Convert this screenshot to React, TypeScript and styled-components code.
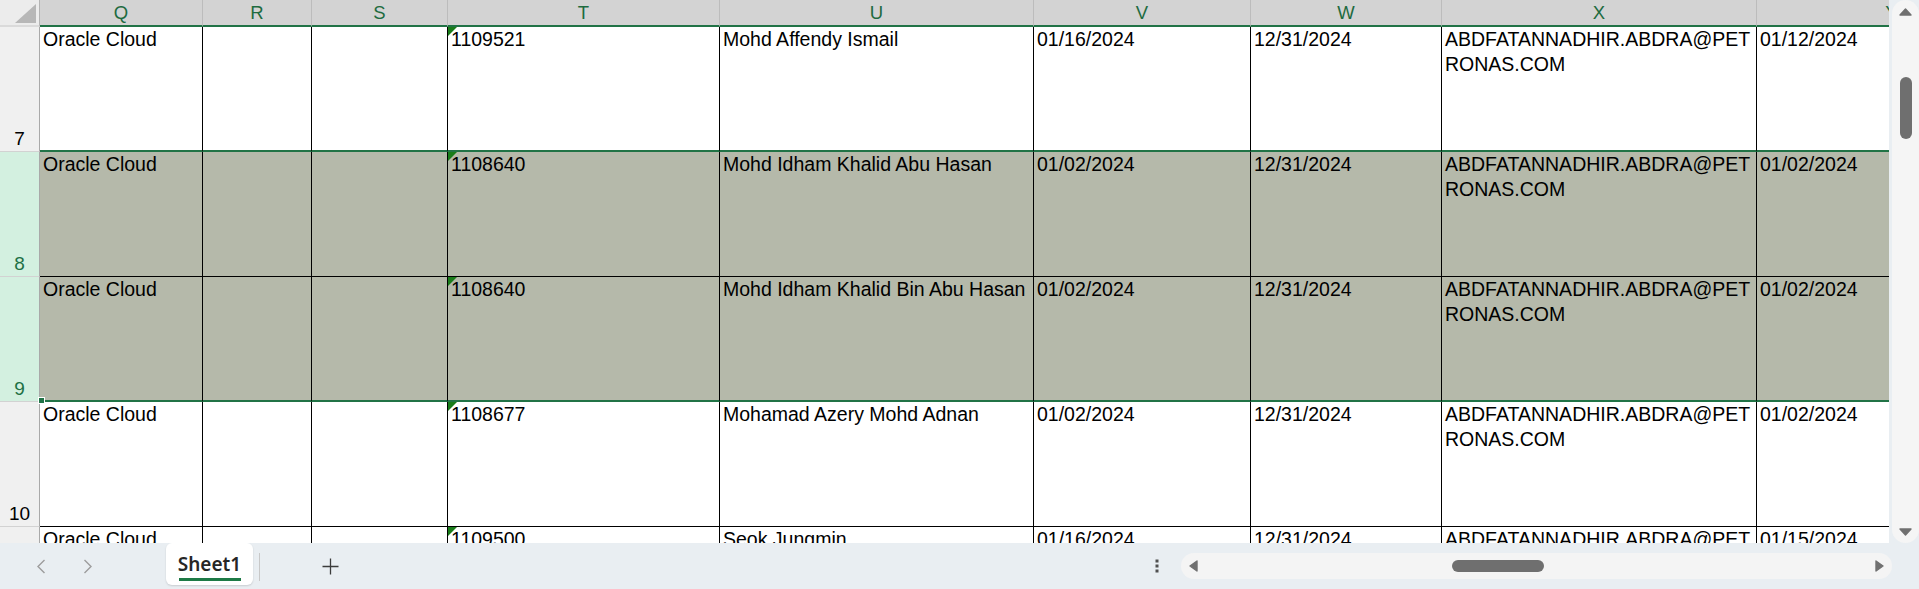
import React from "react";
import styled, { createGlobalStyle } from "styled-components";

const GlobalStyle = createGlobalStyle`
  html, body {
    margin: 0;
    padding: 0;
  }
  body {
    width: 1919px;
    height: 589px;
    overflow: hidden;
    background: #e9eef2;
    font-family: "Liberation Sans", Arial, sans-serif;
  }
`;

const COLUMNS = [
  { key: "Q", width: 163 },
  { key: "R", width: 109 },
  { key: "S", width: 136 },
  { key: "T", width: 272 },
  { key: "U", width: 314 },
  { key: "V", width: 217 },
  { key: "W", width: 191 },
  { key: "X", width: 315 },
  { key: "Y", width: 270 },
];

const TEMPLATE = `40px ${COLUMNS.map((c) => `${c.width}px`).join(" ")}`;

const EMAIL = (
  <>
    ABDFATANNADHIR.ABDRA@PET
    <br />
    RONAS.COM
  </>
);

type Row = {
  num: number;
  selected: boolean;
  edge: "sel" | "grid";
  id: string;
  name: string;
  start: string;
  end: string;
  last: string;
};

const ROWS: Row[] = [
  { num: 7, selected: false, edge: "sel", id: "1109521", name: "Mohd Affendy Ismail", start: "01/16/2024", end: "12/31/2024", last: "01/12/2024" },
  { num: 8, selected: true, edge: "grid", id: "1108640", name: "Mohd Idham Khalid Abu Hasan", start: "01/02/2024", end: "12/31/2024", last: "01/02/2024" },
  { num: 9, selected: true, edge: "sel", id: "1108640", name: "Mohd Idham Khalid Bin Abu Hasan", start: "01/02/2024", end: "12/31/2024", last: "01/02/2024" },
  { num: 10, selected: false, edge: "grid", id: "1108677", name: "Mohamad Azery Mohd Adnan", start: "01/02/2024", end: "12/31/2024", last: "01/02/2024" },
  { num: 11, selected: false, edge: "grid", id: "1109500", name: "Seok Jungmin", start: "01/16/2024", end: "12/31/2024", last: "01/15/2024" },
];

const Window = styled.div`
  width: 1919px;
  height: 589px;
  display: flex;
  flex-direction: column;
  background: #e9eef2;
`;

const Top = styled.div`
  display: flex;
  height: 543px;
`;

const Sheet = styled.div`
  position: relative;
  flex: 1;
  min-width: 0;
  height: 543px;
  overflow: hidden;
  display: grid;
  grid-template-columns: ${TEMPLATE};
  grid-template-rows: 27px repeat(5, 125px);
  background: #fff;
`;

const Corner = styled.div`
  box-sizing: border-box;
  background: #ececec;
  border-right: 1px solid #b4b4b4;
  border-bottom: 2px solid #dadada;
  display: flex;
  align-items: flex-end;
  justify-content: flex-end;
  padding: 0 3px 2px 0;
  svg {
    display: block;
  }
`;

const ColHeader = styled.div`
  box-sizing: border-box;
  background: #d3d3d3;
  border-right: 1px solid #bcbcbc;
  border-bottom: 2px solid #217346;
  color: #1e6b40;
  font-size: 18.5px;
  line-height: 25px;
  text-align: center;
  overflow: hidden;
`;

const RowHeader = styled.div<{ $selected: boolean }>`
  box-sizing: border-box;
  background: ${(p) => (p.$selected ? "#d3f0e0" : "#f0f0f0")};
  color: ${(p) => (p.$selected ? "#1e7145" : "#000")};
  border-right: 1px solid #a9a9a9;
  border-bottom: 1px solid #d2d2d2;
  display: flex;
  align-items: flex-end;
  justify-content: center;
  padding-bottom: 1px;
  font-size: 19px;
  line-height: 22px;
`;

const Cell = styled.div<{ $fill: boolean; $edge: "sel" | "grid" }>`
  position: relative;
  box-sizing: border-box;
  padding: 0 3px;
  border-right: 1px solid #000;
  border-bottom: ${(p) => (p.$edge === "sel" ? "2px solid #217346" : "1px solid #000")};
  background: ${(p) => (p.$fill ? "#b5b9aa" : "#fff")};
  color: #000;
  font-size: 19.5px;
  line-height: 25px;
  white-space: nowrap;
  overflow: hidden;
`;

const Flag = styled.span`
  position: absolute;
  top: 0;
  left: 0;
  width: 0;
  height: 0;
  border-top: 9px solid #1a7d1a;
  border-right: 9px solid transparent;
`;

const FillHandle = styled.span`
  position: absolute;
  left: 38px;
  top: 397px;
  width: 5px;
  height: 5px;
  background: #217346;
  border: 1px solid #fff;
`;

const VScroll = styled.div`
  width: 30px;
  height: 543px;
  box-sizing: border-box;
  padding-left: 3px;
  background: #e9eef2;
`;

const VTrack = styled.div`
  height: 100%;
  box-sizing: border-box;
  padding: 8px 0 7px;
  background: #f5f5f5;
  border-radius: 14px;
  display: flex;
  flex-direction: column;
  align-items: center;
`;

const VThumb = styled.div`
  margin-top: 61px;
  width: 12px;
  height: 62px;
  border-radius: 6px;
  background: #6f6f6f;
`;

const Grow = styled.div`
  flex: 1;
`;

const TabBar = styled.div`
  height: 46px;
  display: flex;
  align-items: flex-start;
  background: #e9eef2;
`;

const NavGroup = styled.div`
  width: 166px;
  height: 46px;
  box-sizing: border-box;
  padding-left: 17px;
  display: flex;
  align-items: center;
`;

const NavButton = styled.div`
  width: 47px;
  display: flex;
  justify-content: center;
  align-items: center;
`;

const Tab = styled.div`
  width: 87px;
  height: 42px;
  box-sizing: border-box;
  padding-top: 8px;
  background: #fff;
  border-radius: 6px;
  box-shadow: 0 1px 2px rgba(0, 0, 0, 0.14);
  display: flex;
  flex-direction: column;
  align-items: center;
`;

const TabLabel = styled.div`
  font-family: "Noto Sans", "Open Sans", sans-serif;
  font-weight: 600;
  font-size: 19px;
  line-height: 26px;
  color: #262626;
`;

const TabUnderline = styled.div`
  margin-top: 1px;
  width: 62px;
  height: 3px;
  background: #1d7a46;
`;

const Separator = styled.div`
  margin: 10px 0 0 6px;
  width: 1px;
  height: 28px;
  background: #c8c8c8;
`;

const IconButton = styled.div<{ $width: number; $left: number }>`
  margin-left: ${(p) => p.$left}px;
  width: ${(p) => p.$width}px;
  height: 46px;
  display: flex;
  align-items: center;
  justify-content: center;
  svg {
    display: block;
  }
`;

const HScroll = styled.div`
  margin: 10px 27px 0 12px;
  width: 711px;
  height: 26px;
  box-sizing: border-box;
  padding: 0 8px;
  background: #f4f4f4;
  border-radius: 13px;
  display: flex;
  align-items: center;
  svg {
    display: block;
  }
`;

const HThumb = styled.div`
  margin-left: 254px;
  width: 92px;
  height: 12px;
  border-radius: 6px;
  background: #6f6f6f;
`;

const Arrow: React.FC<{ dir: "up" | "down" | "left" | "right" }> = ({ dir }) => {
  const vertical = dir === "up" || dir === "down";
  const w = vertical ? 13 : 9;
  const h = vertical ? 8 : 12;
  const points = {
    up: "6.5,1 12,7 1,7",
    down: "1,1 12,1 6.5,7",
    left: "8,1 8,11 1,6",
    right: "1,1 1,11 8,6",
  }[dir];
  return (
    <svg width={w} height={h} viewBox={`0 0 ${w} ${h}`}>
      <polygon points={points} fill="#707070" stroke="#707070" strokeWidth="1.4" strokeLinejoin="round" />
    </svg>
  );
};

const Chevron: React.FC<{ dir: "left" | "right" }> = ({ dir }) => (
  <svg width="10" height="15" viewBox="0 0 10 15">
    <polyline
      points={dir === "left" ? "8.5,1 2,7.5 8.5,14" : "1.5,1 8,7.5 1.5,14"}
      fill="none"
      stroke="#9d9d9d"
      strokeWidth="1.4"
    />
  </svg>
);

export default function App() {
  return (
    <>
      <GlobalStyle />
      <Window>
        <Top>
          <Sheet>
            <Corner>
              <svg width="21" height="19" viewBox="0 0 21 19">
                <polygon points="21,0 21,19 0,19" fill="#b7b7b7" />
              </svg>
            </Corner>
            {COLUMNS.map((c) => (
              <ColHeader key={c.key}>{c.key}</ColHeader>
            ))}
            {ROWS.map((r) => (
              <React.Fragment key={r.num}>
                <RowHeader $selected={r.selected}>{r.num}</RowHeader>
                <Cell $fill={r.selected} $edge={r.edge}>Oracle Cloud</Cell>
                <Cell $fill={r.selected} $edge={r.edge} />
                <Cell $fill={r.selected} $edge={r.edge} />
                <Cell $fill={r.selected} $edge={r.edge}>
                  <Flag />
                  {r.id}
                </Cell>
                <Cell $fill={r.selected} $edge={r.edge}>{r.name}</Cell>
                <Cell $fill={r.selected} $edge={r.edge}>{r.start}</Cell>
                <Cell $fill={r.selected} $edge={r.edge}>{r.end}</Cell>
                <Cell $fill={r.selected} $edge={r.edge}>{EMAIL}</Cell>
                <Cell $fill={r.selected} $edge={r.edge}>{r.last}</Cell>
              </React.Fragment>
            ))}
            <FillHandle />
          </Sheet>
          <VScroll>
            <VTrack>
              <Arrow dir="up" />
              <VThumb />
              <Grow />
              <Arrow dir="down" />
            </VTrack>
          </VScroll>
        </Top>
        <TabBar>
          <NavGroup>
            <NavButton>
              <Chevron dir="left" />
            </NavButton>
            <NavButton>
              <Chevron dir="right" />
            </NavButton>
          </NavGroup>
          <Tab>
            <TabLabel>Sheet1</TabLabel>
            <TabUnderline />
          </Tab>
          <Separator />
          <IconButton $left={58} $width={24}>
            <svg width="17" height="17" viewBox="0 0 17 17">
              <path d="M8.5 0.5v16M0.5 8.5h16" stroke="#3c3c3c" strokeWidth="1.3" fill="none" />
            </svg>
          </IconButton>
          <Grow />
          <IconButton $left={0} $width={24}>
            <svg width="4" height="14" viewBox="0 0 4 14">
              <rect x="0.5" y="0.5" width="3" height="3" fill="#505050" />
              <rect x="0.5" y="5.5" width="3" height="3" fill="#505050" />
              <rect x="0.5" y="10.5" width="3" height="3" fill="#505050" />
            </svg>
          </IconButton>
          <HScroll>
            <Arrow dir="left" />
            <HThumb />
            <Grow />
            <Arrow dir="right" />
          </HScroll>
        </TabBar>
      </Window>
    </>
  );
}
